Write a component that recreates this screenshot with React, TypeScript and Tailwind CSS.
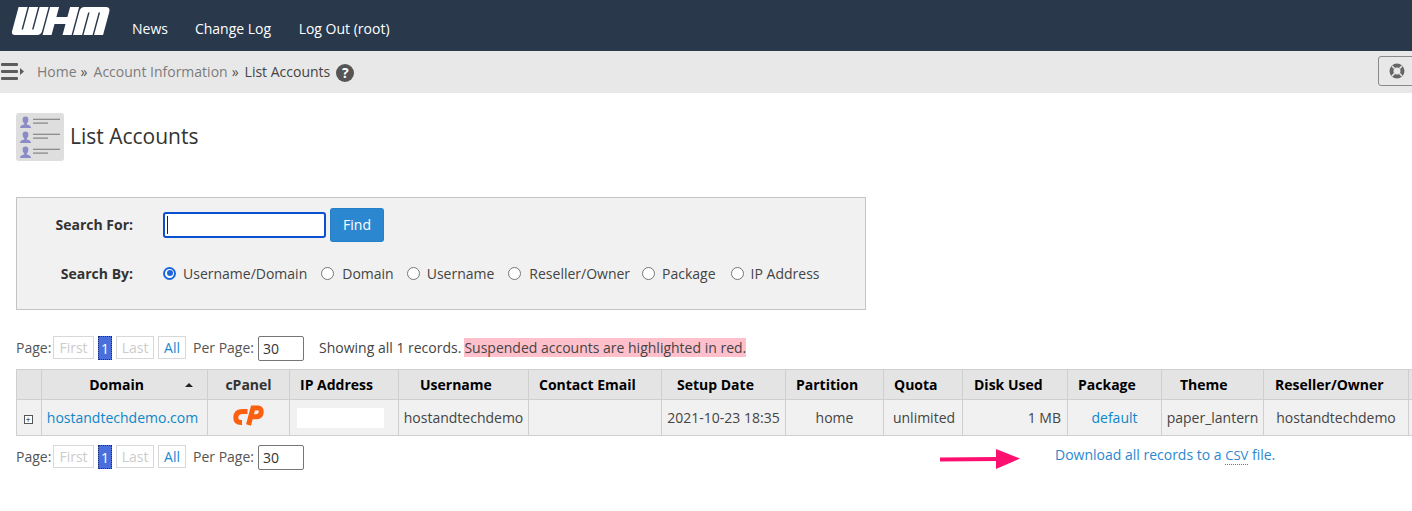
import React from "react";

const font = "font-['Open_Sans',sans-serif]";

function WhmLogo() {
  return (
    <svg width="102" height="36" viewBox="0 0 102 36" className="block">
      <g transform="matrix(1 0 -0.27 1 8.6 0)" fill="#fff">
        <path d="M0 0 H9 V22.5 H10.5 V0 H19.5 V22.5 H21 V0 H30 V24 Q30 28 26 28 H4 Q0 28 0 24 Z" />
        <path d="M31.5 0 H40.5 V10 H51.5 V0 H60.5 V28 H51.5 V17 H40.5 V28 H31.5 Z" />
        <path d="M62 28 V4 Q62 0 66 0 H87 Q92 0 92 5 V28 H83 V5.5 H81.5 V28 H72.5 V5.5 H71 V28 Z" />
      </g>
    </svg>
  );
}

function MenuIcon() {
  return (
    <svg width="24" height="18" viewBox="0 0 24 18" className="block">
      <rect x="1" y="1" width="17" height="3" rx="1" fill="#5c5c5c" />
      <rect x="1" y="8" width="17" height="3" rx="1" fill="#5c5c5c" />
      <rect x="1" y="15" width="17" height="3" rx="1" fill="#5c5c5c" />
      <path d="M20 6 L24 9.5 L20 13 Z" fill="#5c5c5c" />
    </svg>
  );
}

function HelpIcon() {
  return (
    <div className="w-[18px] h-[18px] rounded-full bg-[#555555] flex items-center justify-center text-white text-[14px] font-bold leading-none">
      ?
    </div>
  );
}

function LifeRing() {
  return (
    <svg width="16" height="16" viewBox="0 0 16 16" className="block">
      <circle cx="8" cy="8" r="5.5" fill="none" stroke="#666666" strokeWidth="4" />
      <path d="M3 3 L5.5 5.5 M13 3 L10.5 5.5 M3 13 L5.5 10.5 M13 13 L10.5 10.5" stroke="#e8e8e8" strokeWidth="1.6" />
    </svg>
  );
}

function Person({ y }: { y: number }) {
  return (
    <g transform={`translate(0 ${y})`}>
      <path d="M9.5 0 Q12.6 0 12.4 3.4 Q12.2 6 10.8 7 V8 Q15 8.6 15 11.6 H4 Q4 8.6 8.2 8 V7 Q6.8 6 6.6 3.4 Q6.4 0 9.5 0 Z" fill="#8b8cc7" />
      <rect x="17" y="2.2" width="27" height="1.2" fill="#848484" />
      <rect x="17" y="6" width="15" height="1.2" fill="#848484" />
    </g>
  );
}

function ListIcon() {
  return (
    <div className="w-12 h-12 rounded-[3px] bg-[#dedede]">
      <svg width="48" height="48" viewBox="0 0 48 48" className="block">
        <Person y={3.5} />
        <Person y={18.5} />
        <Person y={33.5} />
      </svg>
    </div>
  );
}

function CpanelLogo() {
  return (
    <svg width="31" height="21" viewBox="0 0 31 21" className="block">
      <path d="M14.5 6.5 H9.5 Q3 6.5 2.8 12.5 Q2.8 17.5 8 17.5 H9" fill="none" stroke="#fb5f10" strokeWidth="5" />
      <path d="M15.5 20 L20 3 H25 Q28.6 3 28.2 7.5 Q27.5 11.8 23 11.8 H19.5" fill="none" stroke="#fb5f10" strokeWidth="5" />
    </svg>
  );
}

function PageBar({ children }: { children?: React.ReactNode }) {
  const disabled = "h-[23px] border border-[#d8d8d8] text-[#cccccc] flex items-center justify-center";
  return (
    <div className="flex items-start text-[14px] leading-[23px] text-[#555555]">
      <span className="w-[37px]">Page:</span>
      <span className={`${disabled} w-[41px]`}>First</span>
      <span className="ml-1 w-[14px] h-[24px] bg-[#4a6fdc] border border-dotted border-[#1c2c66] text-white flex items-center justify-center">1</span>
      <span className={`${disabled} w-[38px] ml-1`}>Last</span>
      <span className="ml-1 w-[28px] h-[23px] border border-[#d8d8d8] text-[#1a8ad0] flex items-center justify-center">All</span>
      <span className="ml-[7px] w-[65px]">Per Page:</span>
      <span className="w-[46px] h-[25px] border border-[#767676] rounded-[2px] pl-1 text-[#333333] leading-[24px]">30</span>
      {children}
    </div>
  );
}

const radios: { label: string; gap: string; text: string }[] = [
  { label: "Username/Domain", gap: "", text: "ml-[7px]" },
  { label: "Domain", gap: "ml-[14px]", text: "ml-[8px]" },
  { label: "Username", gap: "ml-[13px]", text: "ml-[7px]" },
  { label: "Reseller/Owner", gap: "ml-[14px]", text: "ml-[8px]" },
  { label: "Package", gap: "ml-[12px]", text: "ml-[7px]" },
  { label: "IP Address", gap: "ml-[15px]", text: "ml-[7px]" },
];

const headers: { t: string; cls: string }[] = [
  { t: "", cls: "w-[25px]" },
  { t: "Domain", cls: "w-[166px] text-center pr-[16px]" },
  { t: "cPanel", cls: "w-[82px] text-center !text-[#333333]" },
  { t: "IP Address", cls: "w-[109px] text-left pl-[10px]" },
  { t: "Username", cls: "w-[130px] text-left pl-[21px]" },
  { t: "Contact Email", cls: "w-[133px] text-left pl-[10px]" },
  { t: "Setup Date", cls: "w-[124px] text-left pl-[15px]" },
  { t: "Partition", cls: "w-[98px] text-left pl-[10px]" },
  { t: "Quota", cls: "w-[79px] text-left pl-[10px]" },
  { t: "Disk Used", cls: "w-[105px] text-left pl-[11px]" },
  { t: "Package", cls: "w-[94px] text-left pl-[10px]" },
  { t: "Theme", cls: "w-[102px] text-left pl-[18px]" },
  { t: "Reseller/Owner", cls: "w-[145px] text-left pl-[11px]" },
  { t: "", cls: "w-[40px]" },
];

const cell = "border border-[#cfcfcf] p-0 align-middle";

export default function App() {
  return (
    <div className={`${font} relative w-[1412px] h-[511px] overflow-hidden bg-white text-[14px] text-[#333333]`}>
      <header className="h-[51px] bg-[#29384b] flex items-start">
        <div className="ml-[10px] mt-[7px]">
          <WhmLogo />
        </div>
        <nav className="ml-[20px] flex text-white text-[14px] leading-[58px]">
          <span>News</span>
          <span className="ml-[27px]">Change Log</span>
          <span className="ml-[27.5px]">Log Out (root)</span>
        </nav>
      </header>

      <div className="h-[42px] bg-[#e8e8e8] flex items-center">
        <div className="-mt-[2px]">
          <MenuIcon />
        </div>
        <div className="ml-[13px] flex items-center text-[14px] -mt-[2px]">
          <span className="text-[#7c7c7c]">Home</span>
          <span className="ml-1 text-[#555555]">»</span>
          <span className="ml-[6px] text-[#7c7c7c]">Account Information</span>
          <span className="ml-1 text-[#555555]">»</span>
          <span className="ml-[6px] text-[#444444]">List Accounts</span>
          <span className="ml-[6px] mt-[4px]">
            <HelpIcon />
          </span>
        </div>
        <div className="ml-auto w-[40px] h-[30px] -mt-[2px] -mr-[6px] border border-[#8a8a8a] rounded-[3px] flex items-center pl-[10px]">
          <LifeRing />
        </div>
      </div>

      <main className="px-4">
        <div className="mt-5 flex items-center h-12">
          <ListIcon />
          <h1 className="ml-[6px] -mt-[2px] text-[21px] leading-[28px] font-normal text-[#333333]">List Accounts</h1>
        </div>

        <section className="mt-9 w-[850px] h-[113px] border border-[#c4c4c4] bg-[#f1f1f1]">
          <div className="flex items-center mt-[10px] h-[34px]">
            <span className="w-[116px] -mt-[2px] text-right font-bold text-[#333333]">Search For:</span>
            <div className="ml-[30px] w-[163px] h-[26px] rounded-[3px] border-2 border-[#0a50d0] bg-white flex items-center pl-[2px]">
              <span className="w-px h-[18px] bg-[#222222]" />
            </div>
            <button className="ml-1 w-[54px] h-[34px] rounded-[3px] bg-[#2b88d0] border border-dotted border-[#2478ba] text-white text-[14px] pb-[2px]">Find</button>
          </div>
          <div className="flex items-center mt-[21px] h-[20px]">
            <span className="w-[116px] text-right font-bold text-[#333333]">Search By:</span>
            <div className="ml-[30px] flex items-center text-[#444444]">
              {radios.map((r, i) => (
                <label key={r.label} className={`flex items-center ${r.gap}`}>
                  {i === 0 ? (
                    <span className="w-[13px] h-[13px] rounded-full border-[2.5px] border-[#1b66dc] bg-white flex items-center justify-center">
                      <span className="w-[6px] h-[6px] rounded-full bg-[#1b66dc]" />
                    </span>
                  ) : (
                    <span className="w-[13px] h-[13px] rounded-full border border-[#767676] bg-white" />
                  )}
                  <span className={r.text}>{r.label}</span>
                </label>
              ))}
            </div>
          </div>
        </section>

        <div className="mt-[26px]">
          <PageBar>
            <span className="ml-[15px] text-[#444444]">Showing all 1 records.</span>
            <span className="ml-[3px] mt-[2px] h-[19px] leading-[19px] bg-[#ffc0cb] text-[#444444]">Suspended accounts are highlighted in red.</span>
          </PageBar>
        </div>

        <table className="mt-2 table-fixed border-collapse w-[1432px]">
          <thead>
            <tr className="h-[30px] bg-[#e4e4e4]">
              {headers.map((h, i) => (
                <th key={i} className={`${cell} relative font-bold text-[14px] text-black ${h.cls}`}>
                  {h.t}
                  {h.t === "Domain" && (
                    <span className="absolute right-[14px] top-[13px] w-0 h-0 border-x-[4px] border-x-transparent border-b-[4px] border-b-[#222222]" />
                  )}
                </th>
              ))}
            </tr>
          </thead>
          <tbody>
            <tr className="h-[36px] bg-[#f1f1f1] text-[14px] text-[#444444]">
              <td className={`${cell} text-center pr-[2px]`}>
                <span className="inline-flex w-[9px] h-[9px] border border-[#555555] bg-white items-center justify-center text-[9px] leading-none text-[#222222]">+</span>
              </td>
              <td className={`${cell} text-center text-[#0d87c9] pr-[4px]`}>hostandtechdemo.com</td>
              <td className={cell}>
                <div className="flex justify-center -mt-[5px]">
                  <CpanelLogo />
                </div>
              </td>
              <td className={`${cell} pl-[7px]`}>
                <div className="w-[87px] h-5 bg-white" />
              </td>
              <td className={`${cell} text-center`}>hostandtechdemo</td>
              <td className={cell} />
              <td className={`${cell} text-center`}>2021-10-23 18:35</td>
              <td className={`${cell} text-center`}>home</td>
              <td className={`${cell} text-center pl-[2px]`}>unlimited</td>
              <td className={`${cell} text-right pr-[6px]`}>1 MB</td>
              <td className={`${cell} text-center text-[#0d87c9]`}>default</td>
              <td className={`${cell} text-center`}>paper_lantern</td>
              <td className={`${cell} text-center`}>hostandtechdemo</td>
              <td className={cell} />
            </tr>
          </tbody>
        </table>

        <div className="mt-[9px] relative">
          <PageBar />
          <div className="absolute left-[1039px] top-0 text-[14px] leading-[20px] text-[#2b88d0] whitespace-nowrap">
            Download all records to a{" "}
            <span className="text-[13px] border-b border-dotted border-[#2b88d0]">CSV</span> file.
          </div>
          <svg width="82" height="22" viewBox="0 0 82 22" className="absolute left-[923px] top-[3px]">
            <path d="M1 9.5 L58 9 L58 13 L1 13.5 Z" fill="#ff0f70" />
            <path d="M57 1 L81 10.5 L57 21 Z" fill="#ff0f70" />
          </svg>
        </div>
      </main>
    </div>
  );
}
